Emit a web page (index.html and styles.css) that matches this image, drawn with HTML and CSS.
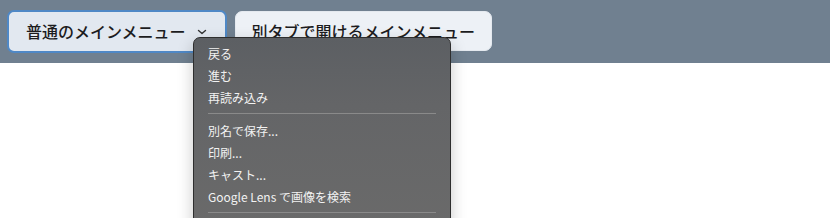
FILE: index.html
```html
<!DOCTYPE html>
<html lang="ja">
<head>
<meta charset="utf-8">
<link rel="stylesheet" href="styles.css">
</head>
<body>
<header class="bar">
  <div class="menu-wrap">
    <button class="btn btn-primary">普通のメインメニュー<svg class="chev" width="10" height="6" viewBox="0 0 10 6"><path d="M1.5 1.5 L5 4.5 L8.5 1.5" fill="none" stroke="#333" stroke-width="1.4" stroke-linecap="round" stroke-linejoin="round"/></svg></button>
    <div class="menu">
      <div class="item">戻る</div>
      <div class="item">進む</div>
      <div class="item">再読み込み</div>
      <div class="sep"></div>
      <div class="item">別名で保存...</div>
      <div class="item">印刷...</div>
      <div class="item">キャスト...</div>
      <div class="item">Google Lens で画像を検索</div>
      <div class="sep"></div>
    </div>
  </div>
  <button class="btn btn-secondary">別タブで開けるメインメニュー</button>
</header>
<main class="page"></main>
</body>
</html>
```

FILE: styles.css
```css
html, body {
  margin: 0;
  padding: 0;
  background: #ffffff;
  font-family: "Noto Sans CJK JP", "Noto Sans", sans-serif;
}
body {
  min-height: 218px;
}
.page {
  height: 155px;
}
.bar {
  height: 63px;
  box-sizing: border-box;
  background: #708090;
  display: flex;
  align-items: center;
  gap: 8px;
  padding: 0 8px 1px 7px;
  position: relative;
  z-index: 5;
}
.menu-wrap {
  position: relative;
}
.btn {
  font-family: "Noto Sans CJK JP", sans-serif;
  font-size: 16px;
  font-weight: 500;
  color: #1c1c1e;
  border-radius: 7px;
  display: flex;
  align-items: center;
  cursor: pointer;
  line-height: 1;
}
.btn-primary {
  height: 43px;
  background: #e2e8f0;
  border: 2px solid #4f88c6;
  padding: 0 18px 0 17px;
}
.chev {
  margin-left: 11px;
  margin-top: 2px;
}
.btn-secondary {
  height: 40px;
  background: #edf1f6;
  border: 1px solid #e4e9ef;
  padding: 0 16px;
}
.menu {
  position: absolute;
  left: 186px;
  top: 27px;
  width: 258px;
  box-sizing: border-box;
  padding: 5px 0 10px;
  background: linear-gradient(180deg, #5c5f63 0%, #646567 35%, #6a6a6a 100%);
  border: 1px solid #2e2e2e;
  border-radius: 7px;
  box-shadow: 0 6px 16px rgba(0, 0, 0, 0.22);
  z-index: 10;
}
.item {
  height: 22px;
  display: flex;
  align-items: center;
  padding-left: 14px;
  font-size: 12px;
  color: #f2f2f2;
  font-family: "Noto Sans CJK JP", "Noto Sans", sans-serif;
}
.sep {
  height: 1px;
  margin: 4px 14px 6px 14px;
  background: #8a8a8a;
}
```
